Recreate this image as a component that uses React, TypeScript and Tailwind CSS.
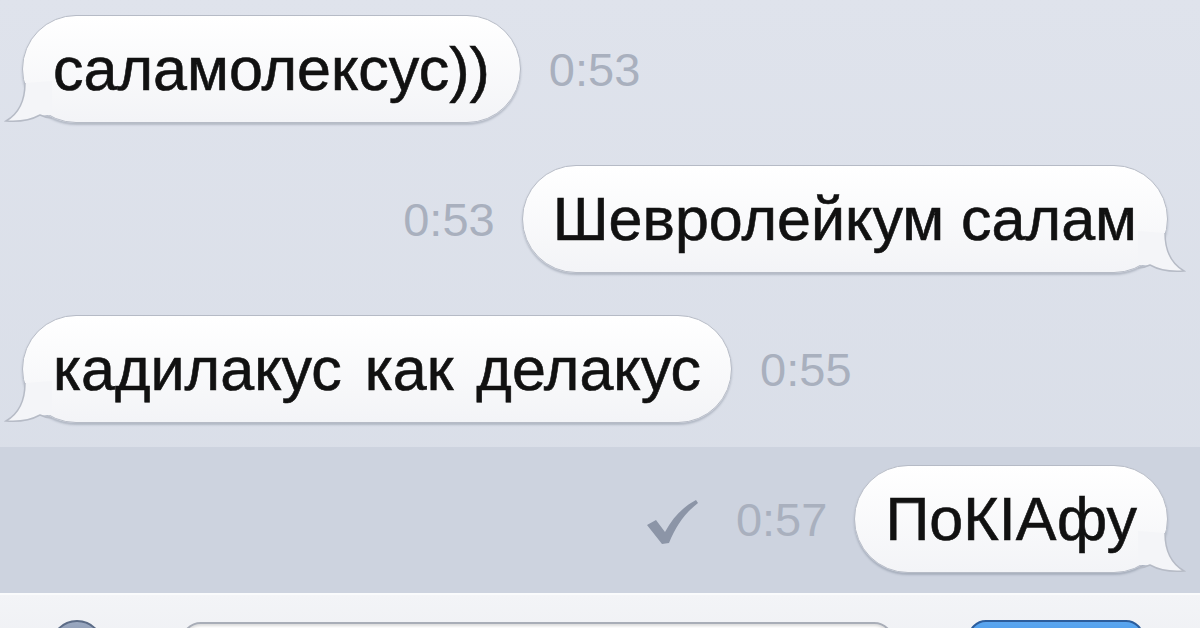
import React from 'react';

const bubble =
  'relative flex h-[108px] items-center rounded-[54px] border-[1.5px] border-[#b6bbc6] bg-gradient-to-b from-[#ffffff] to-[#f3f4f7] px-[30px] shadow-[0_2px_2px_rgba(60,70,90,0.25)]';

const msgText =
  "font-['Liberation_Sans',Arial,sans-serif] text-[61px] leading-none text-[#111] [-webkit-text-stroke:0.6px_#111]";
const timeText = "font-['Liberation_Sans',Arial,sans-serif] text-[47px] leading-none text-[#a9b0be]";

function TailLeft() {
  return (
    <svg className="absolute bottom-[-3px] left-[-19px]" width="48" height="44" viewBox="0 0 48 44">
      <path d="M21 2 C21 20 14 33 2 40 C14 41 27 39 36 34 L48 34 L48 0 Z" fill="#f4f5f8" />
      <path
        d="M21 2 C21 20 14 33 2 40 C14 41 27 39 36 34 C40 36 44 37 48 37"
        fill="none"
        stroke="#b6bbc6"
        strokeWidth="1.5"
      />
    </svg>
  );
}

function TailRight() {
  return (
    <svg className="absolute bottom-[-3px] right-[-19px]" width="48" height="44" viewBox="0 0 48 44">
      <path d="M27 2 C27 20 34 33 46 40 C34 41 21 39 12 34 L0 34 L0 0 Z" fill="#f4f5f8" />
      <path
        d="M27 2 C27 20 34 33 46 40 C34 41 21 39 12 34 C8 36 4 37 0 37"
        fill="none"
        stroke="#b6bbc6"
        strokeWidth="1.5"
      />
    </svg>
  );
}

function Incoming({ text, time, wide }: { text: string; time: string; wide?: boolean }) {
  return (
    <div className="flex items-center gap-[28px] pl-[22px]">
      <div className={bubble}>
        <TailLeft />
        <span className={`relative ${msgText} ${wide ? '[word-spacing:6px]' : ''}`}>{text}</span>
      </div>
      <span className={timeText}>{time}</span>
    </div>
  );
}

function Outgoing({ text, time, check }: { text: string; time: string; check?: boolean }) {
  return (
    <div className="flex items-center justify-end gap-[27px] pr-[32px]">
      {check && (
        <svg className="mr-[10px] mt-[6px]" width="54" height="46" viewBox="0 0 54 46">
          <path d="M2 26 L11 21 L20 33 C28 18 38 8 51 1 L53 4 C40 14 31 27 24 44 L17 45 Z" fill="#8c95a7" />
        </svg>
      )}
      <span className={timeText}>{time}</span>
      <div className={bubble}>
        <TailRight />
        <span className={`relative ${msgText}`}>{text}</span>
      </div>
    </div>
  );
}

export default function App() {
  return (
    <div className="flex h-[628px] w-[1200px] flex-col overflow-hidden bg-gradient-to-b from-[#dfe3ec] to-[#d8dde7]">
      <div className="flex flex-col gap-[42px] pt-[15px]">
        <Incoming text="саламолексус))" time="0:53" />
        <Outgoing text="Шевролейкум салам" time="0:53" />
        <Incoming text="кадилакус как делакус" time="0:55" wide />
      </div>
      <div className="mt-[24px] bg-[#cdd3df] pb-[20px] pt-[18px]">
        <Outgoing text="ПоКIАфу" time="0:57" check />
      </div>
      <div className="flex flex-1 items-start gap-[77px] border-t-2 border-[#fafbfc] bg-gradient-to-b from-[#f3f4f7] to-[#eceef2] pl-[50px] pt-[25px]">
        <div className="h-[54px] w-[54px] shrink-0 rounded-full border-2 border-[#5b6b86] bg-gradient-to-b from-[#9aa8c0] to-[#6a7a96]" />
        <div className="mt-[2px] h-[60px] w-[713px] shrink-0 rounded-[20px] border-2 border-[#a8adb7] bg-white shadow-[inset_0_2px_3px_rgba(0,0,0,0.15)]" />
        <div className="ml-[-3px] h-[60px] w-[176px] shrink-0 rounded-[18px] border-2 border-[#2c5d9c] bg-gradient-to-b from-[#5aa6f0] to-[#2f7fd6]" />
      </div>
    </div>
  );
}
